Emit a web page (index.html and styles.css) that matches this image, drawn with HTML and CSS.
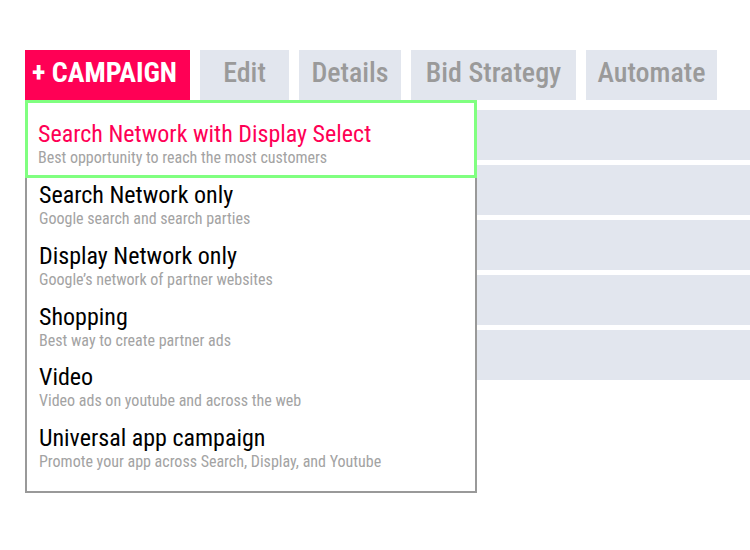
FILE: index.html
```html
<!DOCTYPE html>
<html lang="en">
<head>
<meta charset="utf-8">
<title>Campaign</title>
<link rel="stylesheet" href="styles.css">
</head>
<body>
<div class="page">
  <nav class="tabs">
    <div class="tab tab-campaign">+ CAMPAIGN</div>
    <div class="tab tab-edit">Edit</div>
    <div class="tab tab-details">Details</div>
    <div class="tab tab-bid">Bid Strategy</div>
    <div class="tab tab-automate">Automate</div>
  </nav>
  <div class="main">
    <div class="dropdown">
      <div class="item item-active">
        <div class="item-title">Search Network with Display Select</div>
        <div class="item-sub">Best opportunity to reach the most customers</div>
      </div>
      <div class="item">
        <div class="item-title">Search Network only</div>
        <div class="item-sub">Google search and search parties</div>
      </div>
      <div class="item">
        <div class="item-title">Display Network only</div>
        <div class="item-sub">Google’s network of partner websites</div>
      </div>
      <div class="item">
        <div class="item-title">Shopping</div>
        <div class="item-sub">Best way to create partner ads</div>
      </div>
      <div class="item">
        <div class="item-title">Video</div>
        <div class="item-sub">Video ads on youtube and across the web</div>
      </div>
      <div class="item">
        <div class="item-title">Universal app campaign</div>
        <div class="item-sub">Promote your app across Search, Display, and Youtube</div>
      </div>
    </div>
    <div class="rows">
      <div class="row"></div>
      <div class="row"></div>
      <div class="row"></div>
      <div class="row"></div>
      <div class="row"></div>
    </div>
  </div>
</div>
</body>
</html>
```
FILE: styles.css
```css
* { box-sizing: border-box; }
html, body { margin: 0; padding: 0; background: #fff; }
body {
  font-family: "Roboto Condensed", "Roboto", "Liberation Sans", sans-serif;
  font-stretch: condensed;
}
.page { padding: 50px 0 0 25px; }
.tabs { display: flex; gap: 10px; }
.tab {
  height: 50px;
  padding-bottom: 4px;
  line-height: 46px;
  text-align: center;
  background: #e2e6ee;
  color: #9a9a9a;
  font-size: 28px;
  font-weight: 500;
  white-space: nowrap;
}
.tab-campaign {
  width: 165px;
  text-align: left;
  padding-left: 7px;
  background: #ff0055;
  color: #fff;
  font-weight: bold;
}
.tab-edit { width: 89px; }
.tab-details { width: 102px; }
.tab-bid { width: 165px; }
.tab-automate { width: 131px; }

.main { display: flex; align-items: flex-start; }
.dropdown {
  width: 452px;
  flex: none;
  border: 2px solid #999999;
  border-top: none;
  padding-bottom: 9px;
}
.item { padding: 3px 0 9.75px 12px; }
.item-active {
  margin: 0 -2px;
  border: 3px solid #80ff80;
  padding: 17px 0 7px 10px;
}
.item-title {
  font-size: 24px;
  line-height: 28px;
  font-weight: 400;
  color: #000;
  white-space: nowrap;
}
.item-active .item-title { color: #ff0055; }
.item-sub {
  font-size: 16px;
  line-height: 20px;
  font-weight: 400;
  color: #a3a3a3;
  white-space: nowrap;
}
.rows {
  flex: 1;
  margin-top: 10px;
  display: flex;
  flex-direction: column;
  gap: 5px;
}
.row { height: 50px; background: #e2e6ee; }
```
